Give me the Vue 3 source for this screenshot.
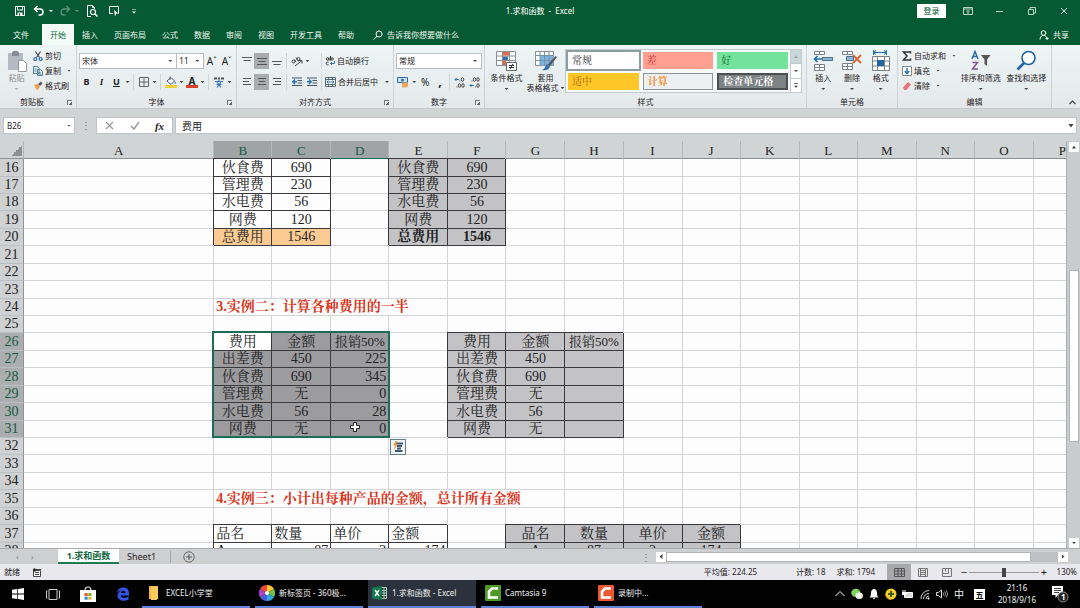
<script setup>
import { ref } from 'vue'

const menus = ['插入', '页面布局', '公式', '数据', '审阅', '视图', '开发工具', '帮助']

const cellStyles = [
    { name: '常规', cls: 'normal' },
    { name: '差', cls: 'bad' },
    { name: '好', cls: 'good' },
    { name: '适中', cls: 'neutral' },
    { name: '计算', cls: 'calc' },
    { name: '检查单元格', cls: 'check' }
]

const nameBox = ref('B26')
const formula = ref('费用')
const zoom = ref(50)

const columns = 'ABCDEFGHIJKLMNOP'.split('')
const rows = Array.from({ length: 23 }, (_, i) => i + 16)
const cells = {}

// writes a block of values starting at the given column and row
function put(col, row, values, cls) {
    const start = columns.indexOf(col)
    values.forEach((line, r) => {
        line.forEach((text, c) => {
            cells[columns[start + c] + (row + r)] = { text, cls: 'box ' + cls }
        })
    })
}

const costs = [['伙食费', '690'], ['管理费', '230'], ['水电费', '56'], ['网费', '120']]
put('B', 16, costs, '')
put('B', 20, [['总费用', '1546']], 'orange')
put('E', 16, costs, 'gray')
put('E', 20, [['总费用', '1546']], 'gray bold')

const half = [['费用', '金额'], ['出差费', '450'], ['伙食费', '690'], ['管理费', '无'], ['水电费', '56'], ['网费', '无']]
put('B', 26, half, 'picked')
put('D', 26, [['报销50%']], 'picked rate')
put('D', 27, [['225'], ['345'], ['0'], ['28'], ['0']], 'picked right')
put('F', 26, half, 'gray')
put('H', 26, [['报销50%'], [''], [''], [''], [''], ['']], 'gray rate')
cells.B26.cls = 'box active'

put('B', 37, [['品名', '数量', '单价', '金额']], 'left')
put('B', 38, [['A']], 'left')
put('C', 38, [['87', '2', '174']], 'right')
put('G', 37, [['品名', '数量', '单价', '金额'], ['A', '87', '2', '174']], 'gray')

cells.B24 = { text: '3.实例二：计算各种费用的一半', cls: 'heading', span: 4 }
cells.B35 = { text: '4.实例三：小计出每种产品的金额，总计所有金额', cls: 'heading', span: 6 }

function columnsOf(row) {
    const head = cells['B' + row]
    if (!head || !head.span) return columns
    return columns.filter((c, i) => i < 2 || i > head.span)
}
</script>

<template>
    <div class="app">
        <header class="titlebar">
            <div class="quick">
                <button aria-label="保存"><svg width="12" height="12" viewBox="0 0 12 12"><path d="M1.500 1.500h9v9h-9z" fill="none" stroke="#fff" /><path d="M3 2h6v3.500H3zM3.500 7.500h5v3h-5z" fill="#fff" /><path d="M4 2h4v2.500H4z" fill="#065a33" /><path d="M5 8.500h1.200v2H5z" fill="#065a33" /></svg></button>
                <button class="wide" aria-label="撤消"><svg width="12" height="12" viewBox="0 0 12 12"><path d="M1.500 4h5.500a3 3 0 0 1 0 6H5.500M4.500 1L1.500 4l3 3" fill="none" stroke="#fff" stroke-width="1.500" /></svg><i class="caret"></i></button>
                <button class="wide dim" aria-label="恢复"><svg width="12" height="12" viewBox="0 0 12 12"><path d="M10.500 4H5a3 3 0 0 0 0 6h1.500M7.500 1l3 3-3 3" fill="none" stroke="#fff" stroke-width="1.300" /></svg><i class="caret"></i></button>
                <button aria-label="打印预览"><svg width="12" height="12" viewBox="0 0 12 12"><path d="M5 11.500H1.500V.500h5l2 2V4M6.500.500v2h2" fill="none" stroke="#fff" /><circle cx="7" cy="7" r="2.500" fill="none" stroke="#fff" stroke-width="1.200" /><path d="M9 9l2.500 2.500" stroke="#fff" stroke-width="1.500" /></svg></button>
                <button class="touch" aria-label="触摸模式"><svg width="12" height="12" viewBox="0 0 12 12"><path d="M5 8.500H1.500v-7h9v7H10" fill="none" stroke="#fff" /><path d="M6 5l4.500 3.500H8.300L7 11.500z" fill="#fff" /></svg></button>
                <button aria-label="自定义"><i class="caret bar"></i></button>
            </div>
            <h1>1.求和函数&nbsp; -&nbsp; Excel</h1>
            <div class="window">
                <button class="login">登录</button>
                <button aria-label="功能区显示选项"><svg width="10" height="8" viewBox="0 0 10 8"><path d="M.500.500h9v7h-9zM.500 2h9M5 7V3.500M3.500 5L5 3.500 6.500 5" fill="none" stroke="#b9d6c6" /></svg></button>
                <button aria-label="最小化"><svg width="8" height="8" viewBox="0 0 8 8"><path d="M0 4.500h7" stroke="#b9d6c6" /></svg></button>
                <button aria-label="还原"><svg width="8" height="8" viewBox="0 0 8 8"><path d="M.500 2.500h5v5h-5zM2 2V.500h5.500V6H6" fill="none" stroke="#b9d6c6" /></svg></button>
                <button aria-label="关闭"><svg width="8" height="8" viewBox="0 0 8 8"><path d="M1 1l6 6M7 1L1 7" stroke="#d7e8de" /></svg></button>
            </div>
        </header>

        <nav class="menu">
            <button class="file">文件</button>
            <button class="current">开始</button>
            <button v-for="m in menus" :key="m">{{ m }}</button>
            <button class="tell"><svg width="10" height="10" viewBox="0 0 10 10"><circle cx="6" cy="4" r="3" fill="none" stroke="#fff" /><path d="M4 6.500L.500 9.500" stroke="#fff" /></svg>告诉我你想要做什么</button>
            <button class="share"><svg width="10" height="10" viewBox="0 0 10 10"><circle cx="4.500" cy="3" r="2.300" fill="none" stroke="#fff" /><path d="M1 9.500c0-5 6-5 6.500-2M8 7v3M6.500 8.500h3" fill="none" stroke="#fff" /></svg>共享</button>
        </nav>

        <section class="ribbon">
            <div class="group clipboard">
                <div class="body flat">
                    <button class="big faded">
                        <svg width="20" height="22" viewBox="0 0 20 22"><path d="M1 3h15v17H1z" fill="#b3bac3" /><path d="M5 3c0-3 7-3 7 0v3H5z" fill="#868d94" /><path d="M11.500 10.500h5l3 3v8h-8z" fill="#fff" stroke="#9299a0" /></svg>
                        <span>粘贴</span><i class="caret"></i>
                    </button>
                    <div class="stack">
                        <button><svg width="10" height="10" viewBox="0 0 10 10"><path d="M2.500.500l4 6M7.500.500l-4 6" stroke="#445" stroke-width="1.200" /><circle cx="2.300" cy="8" r="1.500" fill="none" stroke="#2b6ca8" stroke-width="1.200" /><circle cx="7.700" cy="8" r="1.500" fill="none" stroke="#2b6ca8" stroke-width="1.200" /></svg>剪切</button>
                        <button><svg width="10" height="10" viewBox="0 0 10 10"><path d="M.500.500h4l1.500 2v5H.500zM4.500 3.500h3l2 2v4h-5z" fill="#eef3f6" stroke="#4d7f94" /><path d="M1.500 3h2M1.500 5h2M5.500 6.500h2M5.500 8h3" stroke="#4d7f94" /></svg>复制<i class="caret"></i></button>
                        <button><svg width="10" height="10" viewBox="0 0 10 10"><path d="M1 4l4-1 2 3-3 3.500z" fill="#eda052" /><path d="M5 3l3-2.500 1.500 2L7 5z" fill="#555" /></svg>格式刷</button>
                    </div>
                </div>
                <div class="label">剪贴板<i class="launch"></i></div>
            </div>

            <div class="group font">
                <div class="body">
                    <div class="row joined">
                        <label class="combo name"><select aria-label="字体"><option>宋体</option></select><i class="caret"></i></label>
                        <label class="combo size"><select aria-label="字号"><option>11</option></select><i class="caret"></i></label>
                        <button class="ib letter">A<sup>ˆ</sup></button>
                        <button class="ib letter">A<sup>ˇ</sup></button>
                    </div>
                    <div class="row">
                        <button class="ib strong">B</button>
                        <button class="ib strong italic">I</button>
                        <button class="ib strong under">U</button><button class="drop" aria-label="下划线"><i class="caret"></i></button>
                        <i class="sep"></i>
                        <button class="ib" aria-label="边框"><svg width="10" height="10" viewBox="0 0 10 10"><path d="M.500.500h9v9h-9zM5 .500v9M.500 5h9" fill="none" stroke="#666" /></svg></button><button class="drop" aria-label="边框选项"><i class="caret"></i></button>
                        <i class="sep"></i>
                        <button class="ib" aria-label="填充颜色"><svg width="12" height="12" viewBox="0 0 12 12"><path d="M2 5l4-3.500L9.500 5 6 8.500z" fill="#fff" stroke="#557" /><path d="M5 4V0.500" stroke="#557" /><path d="M9.500 5c1.500 1 1.500 2.500.500 3.500z" fill="#2b6ca8" /><path d="M0 9h12v3H0z" fill="#f4cf36" /></svg></button><button class="drop" aria-label="填充选项"><i class="caret"></i></button>
                        <button class="ib fontcolor">A</button><button class="drop" aria-label="颜色选项"><i class="caret"></i></button>
                        <i class="sep"></i>
                        <button class="ib" aria-label="拼音"><svg width="10" height="11" viewBox="0 0 10 11"><path d="M0 1.500h3M4 1.500h2M7 1.500h3" stroke="#555" stroke-width="2" /><path d="M1 4.500h8M5 3v2M3 5l4 5.500M7 5l-4 5.500M2.500 7.500h5" fill="none" stroke="#3b74b4" stroke-width="1.200" /></svg></button><button class="drop" aria-label="拼音选项"><i class="caret"></i></button>
                    </div>
                </div>
                <div class="label">字体<i class="launch"></i></div>
            </div>

            <div class="group align">
                <div class="body">
                    <div class="row">
                        <button class="ib" aria-label="顶端对齐"><svg width="10" height="10" viewBox="0 0 10 10"><path d="M0 1.500h10M1.500 4.500h7" stroke="#555" /></svg></button>
                        <button class="ib on" aria-label="垂直居中"><svg width="10" height="10" viewBox="0 0 10 10"><path d="M0 2.500h10M1.500 5.500h7M0 8.500h10" stroke="#555" /></svg></button>
                        <button class="ib" aria-label="底端对齐"><svg width="10" height="10" viewBox="0 0 10 10"><path d="M0 5.500h10M1.500 8.500h7" stroke="#555" /></svg></button>
                        <i class="sep"></i>
                        <button class="ib" aria-label="方向"><svg width="12" height="12" viewBox="0 0 12 12"><g fill="none" stroke="#444"><circle cx="2.500" cy="6.500" r="1.500" /><path d="M3.500 4.500l1.500 2.500M5 2.500l2.500 4" /><circle cx="7.500" cy="4" r="1.500" /><path d="M4 11L10.500 6M8 5.500h3v3" /></g></svg></button><button class="drop" aria-label="方向选项"><i class="caret"></i></button>
                        <i class="sep far"></i>
                        <button class="text"><svg width="10" height="10" viewBox="0 0 10 10"><g fill="none" stroke="#333"><circle cx="2.500" cy="3" r="1.200" /><path d="M4 1.500v3M5.500 0v4.500" /><circle cx="7" cy="3" r="1.200" /><path d="M3.500 6.200a1.500 1.500 0 1 0 0 2.600" /></g><path d="M9.500 5v2.500h-4M7 6L5.500 7.500 7 9" fill="none" stroke="#2b74b8" /></svg>自动换行</button>
                    </div>
                    <div class="row">
                        <button class="ib" aria-label="左对齐"><svg width="10" height="10" viewBox="0 0 10 10"><path d="M1 1.500h8M1 4.500h6M1 7.500h8" stroke="#555" /></svg></button>
                        <button class="ib on" aria-label="居中"><svg width="10" height="10" viewBox="0 0 10 10"><path d="M1 1.500h8M2 4.500h6M1 7.500h8" stroke="#555" /></svg></button>
                        <button class="ib" aria-label="右对齐"><svg width="10" height="10" viewBox="0 0 10 10"><path d="M1 1.500h8M3 4.500h6M1 7.500h8" stroke="#555" /></svg></button>
                        <i class="sep"></i>
                        <button class="ib" aria-label="减少缩进"><svg width="10" height="10" viewBox="0 0 10 10"><path d="M0 1h10M5.500 3.500H10M5.500 6H10M0 8.500h10" stroke="#456" /><path d="M5 4.800H1M3 2.500L.800 4.800 3 7" fill="none" stroke="#2b74b8" stroke-width="1.400" /></svg></button>
                        <button class="ib" aria-label="增加缩进"><svg width="10" height="10" viewBox="0 0 10 10"><path d="M0 1h10M5.500 3.500H10M5.500 6H10M0 8.500h10" stroke="#456" /><path d="M0 4.800h4M2 2.500l2.200 2.300L2 7" fill="none" stroke="#2b74b8" stroke-width="1.400" /></svg></button>
                        <i class="sep"></i>
                        <button class="text"><svg width="11" height="10" viewBox="0 0 11 10"><path d="M.500.500h10v9H.500zM.500 2.500h10M.500 7.500h10M3.500.500v2M7.500.500v2M3.500 7.500v2M7.500 7.500v2" fill="#fff" stroke="#52697a" /><path d="M2 5h7M3.500 3.500L2 5l1.500 1.500M7.500 3.500L9 5 7.500 6.500" fill="none" stroke="#2b74b8" /></svg>合并后居中<i class="caret"></i></button>
                    </div>
                </div>
                <div class="label">对齐方式<i class="launch"></i></div>
            </div>

            <div class="group number">
                <div class="body">
                    <div class="row">
                        <label class="combo format"><select aria-label="数字格式"><option>常规</option></select><i class="caret"></i></label>
                    </div>
                    <div class="row">
                        <button class="ib" aria-label="会计格式"><svg width="12" height="11" viewBox="0 0 12 11"><path d="M.500.500h10v5H.500z" fill="#cfe2ef" stroke="#2b6ca8" /><circle cx="5.500" cy="3" r="1.500" fill="#2b6ca8" /><path d="M5 5.500h6v4l-2 1H5z" fill="#efa85c" /></svg></button><button class="drop" aria-label="会计选项"><i class="caret"></i></button>
                        <button class="ib percent">%</button>
                        <button class="ib comma">,</button>
                        <i class="sep"></i>
                        <button class="ib" aria-label="增加小数位数"><svg width="11" height="11" viewBox="0 0 11 11"><path d="M5 2.500H1M2.500 1L1 2.500 2.500 4" fill="none" stroke="#2b74b8" /><g fill="none" stroke="#444"><ellipse cx="8.500" cy="2.500" rx="1.200" ry="1.800" /><ellipse cx="5.500" cy="8.500" rx="1.200" ry="1.800" /><ellipse cx="9" cy="8.500" rx="1.200" ry="1.800" /><path d="M2.500 10h1M5.500 4h1" /></g></svg></button>
                        <button class="ib" aria-label="减少小数位数"><svg width="11" height="11" viewBox="0 0 11 11"><path d="M5 8.500H1M2.500 7L1 8.500 2.500 10" fill="none" stroke="#2b74b8" /><g fill="none" stroke="#444"><ellipse cx="5.500" cy="2.500" rx="1.200" ry="1.800" /><ellipse cx="9" cy="2.500" rx="1.200" ry="1.800" /><ellipse cx="9" cy="8.500" rx="1.200" ry="1.800" /><path d="M2.500 4h1M6 10h1" /></g></svg></button>
                    </div>
                </div>
                <div class="label">数字<i class="launch"></i></div>
            </div>

            <div class="group styles">
                <div class="body flat">
                    <button class="big">
                        <svg width="21" height="22" viewBox="0 0 21 22"><path d="M.500 1.500h19v14H.500zM.500 6h19M.500 10.500h19M6.500 1.500v14M13.500 1.500v14" fill="#fff" stroke="#8a8f96" /><path d="M7 2h6v3.500H7z" fill="#e2694a" /><path d="M7 6.500h5V10H7z" fill="#3f6ea8" /><path d="M7 11h3v4H7z" fill="#e2694a" /><path d="M10.500 12.500h10v8h-10z" fill="#fff" stroke="#666" /><path d="M13 15.500h5M13 17.500h5M17 14l-3 5" stroke="#333" /></svg>
                        <span>条件格式</span><i class="caret"></i>
                    </button>
                    <button class="big">
                        <svg width="22" height="22" viewBox="0 0 22 22"><path d="M.500 1.500h18v14H.500z" fill="#fff" stroke="#8a8f96" /><path d="M5 5.500h13.500v10H5z" fill="#7db3e0" /><path d="M.500 5.500h18M.500 10.500h18M5 1.500v14M9.500 1.500v14M14 1.500v14" stroke="#7890a6" /><path d="M20.500 6l1.500 1-7 9-2-1.500z" fill="#555" /><path d="M12 14l3 2.500c-1 4-5 4-8 3.500 3-1 3-4 5-6z" fill="#2f6fb3" /></svg>
                        <span>套用</span><span class="last">表格格式<i class="caret"></i></span>
                    </button>
                    <div class="gallery">
                        <button v-for="s in cellStyles" :key="s.name" :class="s.cls">{{ s.name }}</button>
                    </div>
                    <div class="scroller">
                        <button aria-label="上一行"><i class="caret up"></i></button>
                        <button aria-label="下一行"><i class="caret"></i></button>
                        <button aria-label="其他"><i class="caret bar"></i></button>
                    </div>
                </div>
                <div class="label">样式</div>
            </div>

            <div class="group cellgroup">
                <div class="body flat">
                    <button class="big">
                        <svg width="20" height="22" viewBox="0 0 20 22"><path d="M1.500 1.500h10v3h-10zM6.500 1.500v3M1.500 14.500h10v6h-10zM6.500 14.500v6M1.500 17.500h10" fill="#fff" stroke="#7b8288" /><path d="M9.500 7.500h10v3h-10z" fill="#8fb4d6" stroke="#4b7191" /><path d="M9 9H2M4.500 6L1.500 9l3 3" fill="none" stroke="#1f6fb2" stroke-width="1.600" /></svg>
                        <span>插入</span><i class="caret"></i>
                    </button>
                    <button class="big">
                        <svg width="20" height="22" viewBox="0 0 20 22"><path d="M.500 1.500h10v3H.500zM5.500 1.500v3M.500 13.500h10v6H.500zM5.500 13.500v6M.500 16.500h10" fill="#fff" stroke="#7b8288" /><path d="M4.500 6.500h7v4h-7z" fill="#8fb4d6" stroke="#4b7191" /><path d="M11 5l8 8M19 5l-8 8" stroke="#e0622f" stroke-width="1.800" /></svg>
                        <span>删除</span><i class="caret"></i>
                    </button>
                    <button class="big">
                        <svg width="20" height="22" viewBox="0 0 20 22"><path d="M2.500 2.500h13M5 .500l-2.500 2L5 4.500M13 .500l2.500 2-2.500 2M2.500 0v5M15.500 0v5" fill="none" stroke="#1f6fb2" /><path d="M1.500 6.500h17v14h-17zM1.500 11h17M1.500 16h17M6.500 6.500v14M13.500 6.500v14" fill="#fff" stroke="#7b8288" /><path d="M6 10h7v6H6z" fill="#2464a4" /></svg>
                        <span>格式</span><i class="caret"></i>
                    </button>
                </div>
                <div class="label">单元格</div>
            </div>

            <div class="group editing">
                <div class="body flat">
                    <div class="stack">
                        <button><svg width="10" height="10" viewBox="0 0 10 10"><path d="M8.500 2.500V1H1.500l3.500 4-3.500 4h7V7.500" fill="none" stroke="#333" stroke-width="1.500" /></svg>自动求和<i class="caret"></i></button>
                        <button><svg width="10" height="10" viewBox="0 0 10 10"><path d="M.500.500h9v9h-9z" fill="#fff" stroke="#7b8fa0" /><path d="M5 2v5.500M2.800 5.200L5 7.500l2.200-2.300" fill="none" stroke="#1f6fb2" stroke-width="1.400" /></svg>填充<i class="caret"></i></button>
                        <button><svg width="10" height="10" viewBox="0 0 10 10"><path d="M1 6.500L6 1l3 2.500L4.500 9H2z" fill="#e8737c" /></svg>清除<i class="caret"></i></button>
                    </div>
                    <button class="big wide">
                        <svg width="20" height="22" viewBox="0 0 20 22"><path d="M1 9l3-7.500L7 9M2 6.500h4" fill="none" stroke="#2d6ca8" stroke-width="1.500" /><path d="M1.500 12.500h5l-5 6.500h5.500" fill="none" stroke="#84528e" stroke-width="1.500" /><path d="M10 5h9.500l-3.500 4.500V16l-2.500-2V9.500z" fill="#555" /></svg>
                        <span>排序和筛选</span><i class="caret"></i>
                    </button>
                    <button class="big wide">
                        <svg width="20" height="22" viewBox="0 0 20 22"><circle cx="12.500" cy="8" r="6.500" fill="#fff" stroke="#1f63a6" stroke-width="1.600" /><path d="M8 13l-6.500 6.500" stroke="#1f63a6" stroke-width="2.600" /></svg>
                        <span>查找和选择</span><i class="caret"></i>
                    </button>
                </div>
                <div class="label">编辑</div>
            </div>
            <button class="collapse" aria-label="折叠功能区"><svg width="7" height="5" viewBox="0 0 7 5"><path d="M.500 4l3-3 3 3" fill="none" stroke="#444" stroke-width="1.200" /></svg></button>
        </section>

        <section class="formula">
            <label class="namebox"><input v-model="nameBox" aria-label="名称框"><i class="caret"></i></label>
            <span class="dots">⋮</span>
            <div class="fx">
                <button aria-label="取消"><svg width="9" height="9" viewBox="0 0 9 9"><path d="M1 1l7 7M8 1L1 8" stroke="#999" stroke-width="1.200" /></svg></button>
                <button aria-label="输入"><svg width="10" height="9" viewBox="0 0 10 9"><path d="M1 5l3 3 5-7" fill="none" stroke="#999" stroke-width="1.500" /></svg></button>
                <button class="fn">fx</button>
            </div>
            <label class="content"><input v-model="formula" aria-label="编辑栏"><i class="caret large"></i></label>
        </section>

        <main class="sheet">
            <div class="grid">
                <table>
                    <colgroup>
                        <col class="c-head"><col class="c-first">
                        <col v-for="c in columns.slice(1)" :key="c" class="c-std">
                    </colgroup>
                    <thead>
                        <tr>
                            <th class="corner"></th>
                            <th v-for="c in columns" :key="c" :class="{ sel: 'BCD'.includes(c) }">{{ c }}</th>
                        </tr>
                    </thead>
                    <tbody>
                        <tr v-for="r in rows" :key="r">
                            <th :class="{ sel: r > 25 && r < 32 }">{{ r }}</th>
                            <td v-for="c in columnsOf(r)" :key="c" :class="cells[c + r]?.cls" :colspan="cells[c + r]?.span">
                                {{ cells[c + r]?.text }}
                                <i v-if="c + r === 'B26'" class="selection"></i>
                                <template v-if="c + r === 'D31'">
                                    <svg class="pointer" width="10" height="10" viewBox="0 0 10 10"><path d="M3.500.500h3v3h3v3h-3v3h-3v-3h-3v-3h3z" fill="#fff" stroke="#222" /></svg>
                                    <button class="quick-tag" aria-label="快速分析"><svg width="12" height="12" viewBox="0 0 12 12"><path d="M3.500 2.500h7.500M5 5h5M5 7.500h4M3 10h7.500" stroke="#3f5a78" stroke-width="1.800" /><path d="M3.500 0L1 4.500h2L1.500 9 6 3.500H4L5.500 0z" fill="#f0a33c" /></svg></button>
                                </template>
                            </td>
                        </tr>
                    </tbody>
                </table>
            </div>
            <div class="vscroll">
                <button aria-label="向上"><i class="caret up"></i></button>
                <div class="track"><div class="before"></div><div class="thumb"></div><div class="after"></div></div>
                <button aria-label="向下"><i class="caret"></i></button>
            </div>
        </main>

        <section class="tabs">
            <span class="arrows"><i>‹</i><i>›</i></span>
            <button class="tab current">1.求和函数</button>
            <button class="tab">Sheet1</button>
            <button class="add" aria-label="新工作表"><svg width="12" height="12" viewBox="0 0 12 12"><circle cx="6" cy="6" r="5.200" fill="none" stroke="#666" /><path d="M3 6h6M6 3v6" stroke="#555" /></svg></button>
            <div class="hscroll">
                <span class="dots">⋮</span>
                <button aria-label="向左"><i class="caret toleft"></i></button>
                <div class="track"><div class="thumb"></div></div>
                <button aria-label="向右"><i class="caret toright"></i></button>
            </div>
        </section>

        <footer class="status">
            <span>就绪</span>
            <svg class="macro" width="10" height="9" viewBox="0 0 10 9"><path d="M1.500 2.500h7v6h-7z" fill="#fff" stroke="#444" /><path d="M1 1.500h8M3 4.500h4M3 6.500h4" stroke="#444" stroke-width="1.200" /><circle cx="2.500" cy="2" r="1.700" fill="#333" /></svg>
            <span class="avg">平均值: 224.25</span>
            <span class="count">计数: 18</span>
            <span class="sum">求和: 1794</span>
            <button class="view on" aria-label="普通"><svg width="11" height="9" viewBox="0 0 11 9"><path d="M.500.500h10v8H.500zM.500 3h10M.500 6h10M4 .500v8M7.500.500v8" fill="none" stroke="#555" /></svg></button>
            <button class="view" aria-label="页面布局"><svg width="10" height="9" viewBox="0 0 10 9"><path d="M.500.500h9v8h-9zM2.500 1v7M7.500 1v7M3 2.500h4M3 4.500h4M3 6.500h4" fill="none" stroke="#777" /></svg></button>
            <button class="view" aria-label="分页预览"><svg width="10" height="9" viewBox="0 0 10 9"><path d="M.500.500h9v8h-9zM.500 5.500h6v-5M3.500.500v3" fill="none" stroke="#777" /></svg></button>
            <button class="sign">−</button>
            <input v-model="zoom" type="range" aria-label="缩放">
            <button class="sign">+</button>
            <span class="percent">130%</span>
        </footer>

        <footer class="taskbar">
            <button class="sys" aria-label="开始"><svg width="12" height="12" viewBox="0 0 12 12"><path d="M0 1.800L5.300 1v4.600H0zM6 .900L12 0v5.600H6zM0 6.400h5.300V11L0 10.200zM6 6.400h6V12l-6-.900z" fill="#fff" /></svg></button>
            <button class="sys" aria-label="任务视图"><svg width="14" height="11" viewBox="0 0 14 11"><path d="M3 .500h8v10H3zM1.500 2H.500v7h1M12.500 2h1v7h-1" fill="none" stroke="#ccc" /></svg></button>
            <button class="sys" aria-label="应用商店"><svg width="16" height="16" viewBox="0 0 16 16"><path d="M0 4h16v12H0z" fill="#fff" /><path d="M5 4c0-4 6-4 6 0" fill="none" stroke="#ddd" stroke-width="1.200" /><path d="M4.500 7h3.200v3H4.500z" fill="#e35b2c" /><path d="M8.300 7h3.200v3H8.300z" fill="#7fae2e" /><path d="M4.500 10.700h3.200v3H4.500z" fill="#2c8fd8" /><path d="M8.300 10.700h3.200v3H8.300z" fill="#eab32b" /></svg></button>
            <button class="sys" aria-label="Edge"><svg width="14" height="14" viewBox="0 0 14 14"><path d="M3 8.500h10V6.500C13 2.500 10.500.500 7.500.500 4 .500 1.500 2.500.700 6 2 4.500 3.500 3.500 5.500 3.200 2.500 4.500 1.500 7 1.500 9c.500 4.500 6 6 11 3.500v-3c-3.500 2-7.500 2-7.800-1zM5 6c.300-3 4.500-3 4.500 0z" fill="#3454e8" fill-rule="evenodd" /></svg></button>
            <div class="tasks">
                <button><svg width="16" height="16" viewBox="0 0 16 16"><path d="M3 1h7v13H3z" fill="#f3b53c" /><path d="M5 2l7-1v13l-2 1H5z" fill="#fbcb5e" /></svg>EXCEL小学堂</button>
                <button><svg width="16" height="16" viewBox="0 0 16 16"><path d="M8 8V0a8 8 0 0 1 7 4z" fill="#f9c731" /><path d="M8 8l7-4a8 8 0 0 1 0 8z" fill="#74c043" /><path d="M8 8l7 4a8 8 0 0 1-7 4z" fill="#2fa7dc" /><path d="M8 8v8a8 8 0 0 1-7-4z" fill="#4a5fd8" /><path d="M8 8l-7 4a8 8 0 0 1 0-8z" fill="#b044c4" /><path d="M8 8L1 4a8 8 0 0 1 7-4z" fill="#ee4a3c" /><circle cx="8" cy="8" r="2" fill="#fff" /></svg>新标签页 - 360极...</button>
                <button class="current"><svg width="16" height="16" viewBox="0 0 16 16"><path d="M9.500 2.500h5v11h-5M12 2.500v11M9.500 5.500h5M9.500 8h5M9.500 10.500h5" fill="none" stroke="#9fd3ba" /><path d="M0 2.500L10 1v14L0 13.500z" fill="#13794c" /><path d="M3 5l4 6M7 5l-4 6" stroke="#fff" stroke-width="1.400" /></svg>1.求和函数 - Excel</button>
                <button><svg width="16" height="16" viewBox="0 0 16 16"><rect width="16" height="16" rx="1" fill="#4d9a26" /><path d="M13 3.500H7L4 6.500v6h9" fill="none" stroke="#fff" stroke-width="2.600" /></svg>Camtasia 9</button>
                <button><svg width="16" height="16" viewBox="0 0 16 16"><rect width="16" height="16" rx="1" fill="#ec5630" /><path d="M13 3.500H7L4 6.500v6h9" fill="none" stroke="#fff" stroke-width="2.600" /></svg>录制中...</button>
            </div>
            <div class="tray">
                <svg width="12" height="12" viewBox="0 0 12 12"><path d="M1.500 8L6 3.500 10.500 8" fill="none" stroke="#fff" /></svg>
                <svg width="12" height="12" viewBox="0 0 12 12"><ellipse cx="4.800" cy="4.800" rx="4.600" ry="4" fill="#7fd35b" /><ellipse cx="8.200" cy="7.800" rx="3.700" ry="3.200" fill="#eef5ea" /></svg>
                <svg width="12" height="12" viewBox="0 0 12 12"><path d="M1.500 9.500c1.500-1 1.300-3 1.500-5C3.300 2 4.500 1 6 1s2.700 1 3 3.500c.200 2 0 4 1.500 5zM4.800 10h2.400L6 11.500z" fill="#fff" /></svg>
                <svg width="12" height="12" viewBox="0 0 12 12"><circle cx="6" cy="6" r="5.500" fill="#f2d02c" /><path d="M6 3v6M3 6h6" stroke="#3d5a1c" stroke-width="2" /><path d="M.500 6A5.500 5.500 0 0 0 6 11.500" fill="none" stroke="#e08a2c" /></svg>
                <svg width="12" height="12" viewBox="0 0 12 12"><path d="M2.500 4.500h8v5h-8z" fill="#ddd" stroke="#fff" /><path d="M1 2v3M3 2v3M0 4.500h4v2H0z" stroke="#fff" fill="#fff" /></svg>
                <svg width="12" height="12" viewBox="0 0 12 12"><path d="M2 11a8 8 0 0 1 8-8.500M4.500 11A5.500 5.500 0 0 1 10 5.500M7 11a3 3 0 0 1 3-3" fill="none" stroke="#ccc" /><circle cx="9.500" cy="10.500" r="1" fill="#fff" /></svg>
                <svg width="12" height="12" viewBox="0 0 12 12"><path d="M.500 4.500H2.500L5.500 2v8l-3-2.500h-2z" fill="none" stroke="#ddd" /><path d="M7 4.500q1 1.500 0 3M8.700 3.500q1.800 2.500 0 5M10.400 2.500q2.400 3.500 0 7" fill="none" stroke="#999" /></svg>
                <span>中</span>
                <b>五</b>
                <div class="clock"><span>21:16</span><span>2018/9/16</span></div>
                <svg class="note" width="18" height="18" viewBox="0 0 18 18"><path d="M1 1h11v9H7l-2.500 3v-3H1z" fill="#fff" /><path d="M3 3.500h7M3 5.500h7M3 7.500h5" stroke="#444" /><circle cx="12" cy="12" r="5" fill="#222" stroke="#888" /><text x="10" y="15" font-size="8" font-weight="bold" fill="#fff">1</text></svg>
            </div>
        </footer>
    </div>
</template>

<style>
body {
    margin: 0;
    overflow: hidden;
}
</style>

<style scoped>
* {
    box-sizing: border-box;
}

.app {
    display: flex;
    flex-direction: column;
    height: 100vh;
    font: 8px/12px "Noto Sans", "Noto Sans CJK SC", sans-serif;
    color: #1f2224;
    background: #d0d4d5;
}

button {
    display: flex;
    align-items: center;
    justify-content: center;
    padding: 0;
    border: 0;
    background: none;
    color: inherit;
    font: inherit;
    white-space: nowrap;
}

svg {
    flex: none;
}

input,
select {
    min-width: 0;
    margin: 0;
    padding: 0;
    border: 0;
    outline: 0;
    background: none;
    color: inherit;
    font: inherit;
}

select {
    appearance: none;
}

i {
    font-style: normal;
}

.caret {
    flex: none;
    width: 4px;
    height: 2px;
    background: #444;
    clip-path: polygon(0 0, 100% 0, 50% 100%);
}

.caret.up {
    height: 3px;
    clip-path: polygon(50% 0, 100% 100%, 0 100%);
}

.caret.large {
    width: 6px;
    height: 4px;
}

.caret.bar {
    height: 5px;
    clip-path: polygon(0 0, 100% 0, 100% 20%, 0 20%, 0 60%, 100% 60%, 50% 100%, 0 60%);
}

.caret.toleft {
    width: 3px;
    height: 5px;
    clip-path: polygon(0 50%, 100% 0, 100% 100%);
}

.caret.toright {
    width: 3px;
    height: 5px;
    clip-path: polygon(100% 50%, 0 0, 0 100%);
}

/* title bar */
.titlebar {
    display: grid;
    grid-template-columns: 1fr auto 1fr;
    align-items: center;
    height: 24px;
    padding-bottom: 2px;
    background: #065a33;
    color: #fff;
}

.titlebar .caret {
    background: #fff;
}

.quick {
    display: flex;
    padding-left: 11px;
}

.quick button {
    width: 18px;
    margin-right: 2px;
    gap: 4px;
}

.quick .wide {
    width: 24px;
}

.quick .touch {
    margin-left: 2px;
}

.dim {
    opacity: 0.35;
}

h1 {
    margin: 0;
    font: inherit;
}

.window {
    display: flex;
    justify-content: flex-end;
}

.window button {
    width: 32px;
    height: 14px;
}

.window .login {
    width: 29px;
    margin-right: 6px;
    background: #fff;
    color: #065a33;
}

/* menu */
.menu {
    display: flex;
    height: 21px;
    background: #065a33;
    color: #eef6f1;
}

.menu button {
    padding: 0 8px;
}

.menu .file {
    width: 42px;
}

.menu .current {
    background: #f3fbf7;
    color: #0b6b41;
}

.menu .tell,
.menu .share {
    gap: 4px;
    padding: 0 11px;
}

.menu .share {
    margin-left: auto;
}

/* ribbon */
.ribbon {
    display: flex;
    height: 64px;
    background: linear-gradient(#eef5f5, #e4e8ea);
    border-bottom: 1px solid #c5caca;
}

.group {
    display: flex;
    flex-direction: column;
    padding-top: 3px;
    border-right: 1px solid #cdd3d4;
}

.clipboard { width: 77px; }
.font { width: 160px; }
.align { width: 157px; }
.number { width: 91px; }
.styles { width: 322px; }
.cellgroup { width: 91px; }
.editing { width: 154px; }

.body {
    display: flex;
    flex-direction: column;
    flex: 1;
    gap: 1px;
    padding: 3px 2px 0;
}

.body.flat {
    flex-direction: row;
    gap: 0;
    padding: 0 2px;
}

.label {
    position: relative;
    height: 12px;
    text-align: center;
}

.clipboard .label {
    padding-right: 12px;
}

.launch {
    position: absolute;
    right: 4px;
    bottom: 3px;
    width: 5px;
    height: 5px;
    border: solid #777;
    border-width: 1px 0 0 1px;
    background: linear-gradient(135deg, transparent 60%, #666 60%);
}

.row {
    display: flex;
    align-items: center;
    height: 20px;
}

.sep {
    width: 1px;
    height: 16px;
    margin: 0 2px;
    background: #cfd4d5;
}

.sep.far {
    margin-left: 10px;
}

.ib {
    width: 15px;
    height: 16px;
}

.ib.on {
    background: #a9adb0;
}

.drop {
    width: 7px;
    height: 16px;
}

.strong {
    font-size: 9px;
    font-weight: bold;
}

.italic {
    font-family: "Liberation Serif", serif;
    font-style: italic;
}

.under {
    text-decoration: underline;
}

.letter {
    font-size: 10px;
}

.letter sup {
    font-size: 8px;
}

.fontcolor {
    width: 12px;
    height: 12px;
    margin: 0 1px;
    border-bottom: 3px solid #d8402c;
    font-size: 10px;
    font-weight: bold;
}

.ib.percent {
    font-size: 10px;
}

.comma {
    font-size: 12px;
    font-weight: bold;
}

.combo {
    display: flex;
    align-items: center;
    height: 16px;
    padding: 0 4px 0 2px;
    border: 1px solid #b9bfc1;
    background: #fff;
}

.combo select {
    flex: 1;
    align-self: stretch;
}

.combo.name { width: 99px; }
.combo.size { width: 27px; border-left: 0; }
.combo.format { width: 86px; }

.text {
    gap: 2px;
    padding-left: 1px;
}

.text .caret {
    margin-left: 5px;
}

.big {
    flex-direction: column;
    justify-content: flex-start;
    flex: 1;
    padding-top: 2px;
}

.big span {
    display: flex;
    align-items: center;
    gap: 2px;
    height: 12px;
}

.big span + .caret {
    margin-top: 4px;
}

.big .last {
    margin-top: -2px;
}

.faded {
    color: #8d9296;
}

.faded .caret {
    background: #aaa;
}

.clipboard .big {
    flex: 0 0 29px;
}

.stack {
    display: flex;
    flex-direction: column;
    flex: none;
}

.stack button {
    justify-content: flex-start;
    gap: 2px;
    height: 15px;
    padding-left: 2px;
}

.stack .caret {
    margin-left: 4px;
}

.styles .big {
    flex: 0 0 39px;
}

.gallery {
    display: grid;
    flex: 1;
    grid-template-columns: repeat(3, 1fr);
    grid-template-rows: 17px 17px;
    gap: 4px;
    height: 44px;
    margin-top: 1px;
    padding: 2px;
    border: 1px solid #c2cacc;
    background: #f8fafa;
    font-size: 10px;
    font-family: "Liberation Serif", "Noto Serif CJK SC", "Noto Sans CJK SC", serif;
}

.gallery button {
    justify-content: flex-start;
    padding-left: 4px;
}

.normal { background: #fff; outline: 2px solid #8d9da0; }
.bad { background: #ff9f92; color: #b5312a; }
.good { background: #73e29a; color: #116b34; }
.neutral { background: #ffc628; color: #a96a0c; }
.gallery .calc { border: 1px solid #8b959b; background: #edf0f2; color: #ef8a1c; font-weight: bold; }
.gallery .check { border: 2px solid #4b5153; background: #7d8384; color: #fff; font-weight: bold; }

.scroller {
    display: flex;
    flex-direction: column;
    width: 11px;
    height: 44px;
    margin: 1px 2px 0 0;
    border: 1px solid #c2cacc;
    border-left: 0;
    background: #fff;
}

.scroller button {
    flex: 1;
}

.scroller button:first-child {
    background: #c8d8da;
}

.scroller button:first-child .caret {
    background: #9aa7a9;
}

.scroller button + button {
    border-top: 1px solid #c2cacc;
}

.editing .stack {
    width: 58px;
}

.collapse {
    align-self: flex-end;
    width: 16px;
    height: 12px;
    margin-left: auto;
}

/* formula bar */
.formula {
    display: flex;
    height: 32px;
    padding: 8px 3px 7px;
}

.namebox,
.fx,
.content {
    display: flex;
    align-items: center;
    border: 1px solid #bfc4c6;
    background: #fff;
}

.namebox {
    width: 72px;
    padding: 0 3px;
}

.namebox input {
    flex: 1;
}

.dots {
    width: 21px;
    text-align: center;
    color: #777;
    line-height: 16px;
    font-size: 10px;
}

.fx {
    width: 77px;
    margin-right: 2px;
}

.fx button {
    flex: 1;
}

.fn {
    font: italic bold 11px "Liberation Serif", serif;
}

.content {
    flex: 1;
    padding: 0 2px 0 6px;
    font-size: 10px;
}

.content input {
    flex: 1;
}

/* sheet */
.sheet {
    display: flex;
    flex: 1;
    min-height: 0;
}

.grid {
    flex: 1;
    overflow: hidden;
    background: #fdfdfe;
    border-right: 1px solid #aab0b2;
}

table {
    width: 1092px;
    table-layout: fixed;
    border-spacing: 0;
    font: 14px/16px "Liberation Serif", "Noto Serif CJK SC", "Noto Sans CJK SC", serif;
    color: #222;
}

.c-head { width: 24px; }
.c-first { width: 190px; }
.c-std { width: 58px; }
.c-std:nth-child(2n) { width: 59px; }

th {
    padding: 0;
    border-right: 1px solid #b4b8ba;
    border-bottom: 1px solid #bcbfc1;
    background: #cfd1d3;
    font-weight: normal;
}

thead th {
    height: 18px;
    border-bottom-color: #8b9091;
    background: #d0d4d4;
    font-size: 13px;
    line-height: 15px;
    vertical-align: bottom;
}

tbody th {
    border-right-color: #8f9294;
}

thead .sel {
    border-bottom-color: #1d6b52;
    background: #a0a4a4;
    color: #145c40;
}

tbody .sel {
    background: #abadaf;
    color: #145c40;
}

.corner {
    background: linear-gradient(135deg, transparent 50%, #8d9193 50%) 11px 4px / 11px 11px no-repeat, #d0d4d4;
}

td {
    height: 17px;
    padding: 0;
    border-right: 1px solid #d3d4d7;
    border-bottom: 1px solid #d3d4d7;
    text-align: center;
    white-space: nowrap;
}

tbody tr:nth-child(7n + 1) td,
tbody tr:nth-child(7n + 4) td,
tbody tr:nth-child(7n + 6) td {
    height: 18px;
}

.box {
    position: relative;
    border-color: #3a3a3c;
    box-shadow: -1px -1px 0 #3a3a3c;
}

.gray { background: #c3c3c6; }
.orange { background: #fccb93; }
.picked { background: #9c9c9f; }
.active { background: #fff; }
.bold { font-weight: bold; }
.rate { font-size: 13px; }

.right {
    padding-right: 2px;
    font-size: 14px;
    text-align: right;
}

.left {
    padding-left: 2px;
    text-align: left;
}

.heading {
    padding-left: 2px;
    color: #d8371c;
    font-weight: bold;
    text-align: left;
}

.selection {
    position: absolute;
    z-index: 1;
    top: -2px;
    left: -2px;
    width: 178px;
    height: 107px;
    border: 2px solid #1f6b54;
}

.pointer {
    position: absolute;
    z-index: 2;
    left: 19px;
    top: 1px;
}

.quick-tag {
    position: absolute;
    z-index: 2;
    left: 100%;
    top: 100%;
    width: 16px;
    height: 16px;
    margin: 2px;
    border: 1px solid #5e7f88;
    background: #f3f6f7;
}

.vscroll {
    display: flex;
    flex-direction: column;
    width: 13px;
    padding: 1px 1px 0 2px;
    background: #c9ccce;
}

.vscroll button {
    height: 10px;
    background: #fff;
}

.vscroll .track {
    display: flex;
    flex-direction: column;
    flex: 1;
}

.before { flex: 118; }
.vscroll .thumb { flex: 171; }
.after { flex: 96; }

.thumb {
    border: 1px solid #b1b4b6;
    background: #fff;
}

/* sheet tabs */
.tabs {
    display: flex;
    align-items: center;
    height: 16px;
    border-top: 1px solid #a9aaac;
    background: #cecfd0;
    font-size: 9px;
}

.arrows {
    display: flex;
    gap: 12px;
    width: 58px;
    padding-left: 16px;
    color: #8b8b8d;
}

.tab {
    height: 15px;
    padding: 0 8px;
}

.tab.current {
    width: 61px;
    border-bottom: 2px solid #1f7a52;
    background: #fff;
    color: #14693f;
    font-weight: bold;
}

.add {
    margin-left: 6px;
    padding-left: 12px;
    border-left: 1px solid #a4a5a7;
}

.hscroll {
    display: flex;
    align-items: center;
    width: 40%;
    height: 10px;
    margin: 0 12px 0 auto;
}

.hscroll .dots {
    width: 20px;
}

.hscroll button {
    width: 10px;
    height: 10px;
    background: #fff;
}

.hscroll .track {
    flex: 1;
    height: 10px;
    background: #bfc0c3;
}

.hscroll .thumb {
    width: 93%;
    height: 10px;
}

/* status bar */
.status {
    display: flex;
    align-items: center;
    height: 16px;
    padding: 0 3px 0 4px;
    background: #e9e9ed;
}

.macro {
    margin-left: 12px;
}

.avg {
    margin-left: auto;
}

.count {
    margin-left: 39px;
}

.sum {
    margin: 0 12px 0 11px;
}

.view {
    width: 24px;
    height: 16px;
}

.view.on {
    background: #a9a9ac;
}

.sign {
    width: 10px;
    font-size: 11px;
}

input[type="range"] {
    appearance: none;
    width: 70px;
    height: 12px;
    background: linear-gradient(#999, #999) center / 100% 1px no-repeat;
}

input[type="range"]::-webkit-slider-thumb {
    appearance: none;
    width: 4px;
    height: 9px;
    background: #444;
}

.status .percent {
    width: 28px;
    text-align: right;
}

/* taskbar */
.taskbar {
    display: flex;
    height: 28px;
    background: #020203;
    color: #f0f0f0;
}

.sys {
    width: 35px;
}

.tasks {
    display: flex;
    gap: 5px;
    padding-left: 2px;
}

.tasks button {
    justify-content: flex-start;
    gap: 4px;
    width: 108px;
    padding-left: 4px;
    border-bottom: 2px solid #5f83d8;
}

.tasks .current {
    background: #2b313d;
}

.tray {
    display: flex;
    align-items: center;
    gap: 5px;
    margin-left: auto;
    padding-right: 11px;
}

.tray > span {
    width: 12px;
    font-size: 10px;
    text-align: center;
}

.tray b {
    width: 11px;
    height: 11px;
    margin-left: 4px;
    background: #fff;
    color: #111;
    line-height: 11px;
    text-align: center;
}

.clock {
    display: flex;
    flex-direction: column;
    width: 54px;
    text-align: center;
}

.note {
    margin-left: 2px;
}
</style>
